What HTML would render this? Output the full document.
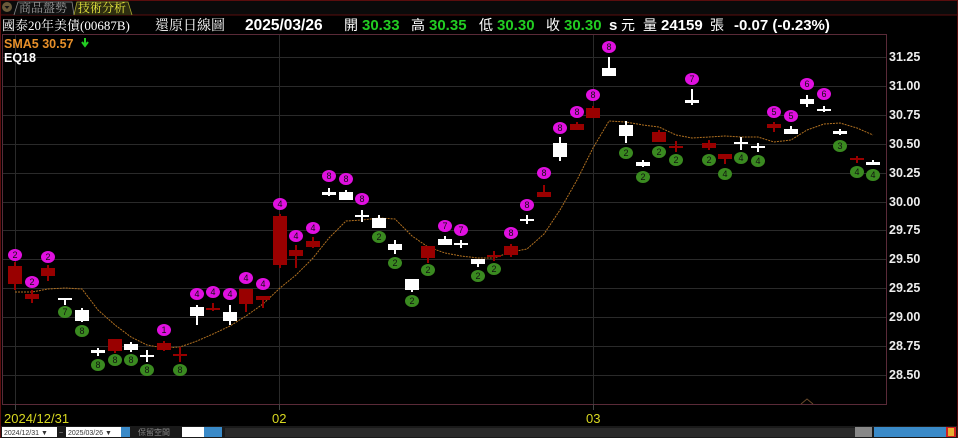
<!DOCTYPE html>
<html><head><meta charset="utf-8"><style>
html,body{margin:0;padding:0;background:#000;width:958px;height:438px;overflow:hidden}
svg{display:block}
</style></head><body>
<svg width="958" height="438" viewBox="0 0 958 438" xmlns="http://www.w3.org/2000/svg" font-family="Liberation Sans, DejaVu Sans, sans-serif">
<rect width="958" height="438" fill="#000"/>
<rect x="0.5" y="0.5" width="957" height="437" fill="none" stroke="#5a0e0e"/>
<rect x="1" y="1" width="956" height="14" fill="#0a0a0a"/>
<line x1="0" y1="15" x2="958" y2="15" stroke="#5a0e0e"/>
<circle cx="7" cy="7" r="5" fill="#6a5a3a"/><path d="M4.5 6 L9.5 6 L7 9 Z" fill="#111"/>
<path d="M14 15 L18 2 L72 2 L74 15" fill="#111" stroke="#888" stroke-width="0.8"/>
<text x="19" y="12" font-size="12" fill="#999" font-family="Liberation Serif, Noto Serif CJK SC, serif">商品盤勢</text>
<path d="M74 15 L77 2 L128 2 L132 15" fill="#2e2e10" stroke="#a8a830" stroke-width="0.8"/>
<text x="78" y="12" font-size="12" fill="#e8e840" font-family="Liberation Serif, Noto Serif CJK SC, serif">技術分析</text>
<g font-size="14" fill="#fff">
<text x="2" y="30" font-size="13" font-family="Liberation Serif, Noto Serif CJK TC, serif">國泰20年美債(00687B)</text>
<text x="155" y="30" font-family="Liberation Serif, Noto Serif CJK TC, serif">還原日線圖</text>
<text x="245" y="30" font-size="15.5" font-weight="bold">2025/03/26</text>
<text x="344" y="30" font-family="Liberation Sans, Noto Sans CJK TC, sans-serif">開</text>
<text x="362" y="30" font-size="15" font-weight="bold" fill="#22cc22">30.33</text>
<text x="411" y="30" font-family="Liberation Sans, Noto Sans CJK TC, sans-serif">高</text>
<text x="429" y="30" font-size="15" font-weight="bold" fill="#22cc22">30.35</text>
<text x="479" y="30" font-family="Liberation Sans, Noto Sans CJK TC, sans-serif">低</text>
<text x="497" y="30" font-size="15" font-weight="bold" fill="#22cc22">30.30</text>
<text x="546" y="30" font-family="Liberation Sans, Noto Sans CJK TC, sans-serif">收</text>
<text x="564" y="30" font-size="15" font-weight="bold" fill="#22cc22">30.30</text>
<text x="609" y="30" font-size="15" font-weight="bold">s</text>
<text x="621" y="30" font-family="Liberation Sans, Noto Sans CJK TC, sans-serif">元</text>
<text x="643" y="30" font-family="Liberation Sans, Noto Sans CJK TC, sans-serif">量</text>
<text x="661" y="30" font-size="15" font-weight="bold">24159</text>
<text x="710" y="30" font-family="Liberation Sans, Noto Sans CJK TC, sans-serif">張</text>
<text x="734" y="30" font-size="15" font-weight="bold">-0.07 (-0.23%)</text>
</g>
<g stroke="#2a2a2a" stroke-width="1">
<line x1="3" y1="57.5" x2="886" y2="57.5"/><line x1="3" y1="86.5" x2="886" y2="86.5"/><line x1="3" y1="115.5" x2="886" y2="115.5"/><line x1="3" y1="144.5" x2="886" y2="144.5"/><line x1="3" y1="173.5" x2="886" y2="173.5"/><line x1="3" y1="202.5" x2="886" y2="202.5"/><line x1="3" y1="230.5" x2="886" y2="230.5"/><line x1="3" y1="259.5" x2="886" y2="259.5"/><line x1="3" y1="288.5" x2="886" y2="288.5"/><line x1="3" y1="317.5" x2="886" y2="317.5"/><line x1="3" y1="346.5" x2="886" y2="346.5"/><line x1="3" y1="375.5" x2="886" y2="375.5"/>
<line x1="15.5" y1="35" x2="15.5" y2="404"/><line x1="279.5" y1="35" x2="279.5" y2="404"/><line x1="593.5" y1="35" x2="593.5" y2="404"/>
</g>
<rect x="2.5" y="34.5" width="884" height="370" fill="none" stroke="#5a2a38"/>
<path d="M801 404 L807 399 L813 404" fill="none" stroke="#6a4a2a"/>
<g stroke="#444"><line x1="15.5" y1="404" x2="15.5" y2="410"/><line x1="279.5" y1="404" x2="279.5" y2="410"/><line x1="593.5" y1="404" x2="593.5" y2="410"/></g>
<text x="4" y="48" font-size="12.5" font-weight="bold" fill="#e8902a">SMA5 30.57</text>
<path d="M85 38 v7 M82 42 l3 4 l3 -4" stroke="#22cc22" stroke-width="2" fill="none"/>
<text x="4" y="62" font-size="12.5" font-weight="bold" fill="#fff">EQ18</text>
<g font-size="12.5" font-weight="bold" fill="#eee">
<text x="889" y="61">31.25</text><text x="889" y="90">31.00</text><text x="889" y="119">30.75</text><text x="889" y="148">30.50</text><text x="889" y="177">30.25</text><text x="889" y="206">30.00</text><text x="889" y="234">29.75</text><text x="889" y="263">29.50</text><text x="889" y="292">29.25</text><text x="889" y="321">29.00</text><text x="889" y="350">28.75</text><text x="889" y="379">28.50</text>
</g>
<g font-size="13" fill="#d8d820"><text x="4" y="423">2024/12/31</text><text x="272" y="423">02</text><text x="586" y="423">03</text></g>
<polyline fill="none" stroke="#b07020" stroke-width="1" stroke-dasharray="2,1" points="15,292 32,292 48,289 65,288 82,289 98,310 115,325 131,337 147,345 164,348 180,347 197,341 213,334 230,326 246,316 263,304 280,288 296,275 313,258 329,238 346,221 362,220 379,218 395,219 412,236 428,247 445,253 461,256 478,258 494,258 511,252 527,249 544,234 560,210 577,180 593,148 609,121 626,122 643,125 659,127 676,135 692,138 709,137 725,136 741,137 758,137 774,142 791,140 807,130 824,124 840,123 857,128 873,135"/>
<g fill="#990000" stroke="#990000" stroke-width="2">
<line x1="15" y1="262" x2="15" y2="290"/><rect x="8" y="266" width="14" height="18" stroke="none"/>
<line x1="32" y1="290" x2="32" y2="303"/><rect x="25" y="294" width="14" height="5" stroke="none"/>
<line x1="48" y1="265" x2="48" y2="281"/><rect x="41" y="268" width="14" height="8" stroke="none"/>
<line x1="115" y1="339" x2="115" y2="353"/><rect x="108" y="339" width="14" height="12" stroke="none"/>
<line x1="164" y1="341" x2="164" y2="351"/><rect x="157" y="343" width="14" height="7" stroke="none"/>
<line x1="180" y1="347" x2="180" y2="362"/><rect x="173" y="354" width="14" height="2" stroke="none"/>
<line x1="213" y1="303" x2="213" y2="311"/><rect x="206" y="308" width="14" height="2" stroke="none"/>
<line x1="246" y1="289" x2="246" y2="312"/><rect x="239" y="289" width="14" height="15" stroke="none"/>
<line x1="263" y1="296" x2="263" y2="308"/><rect x="256" y="296" width="14" height="4" stroke="none"/>
<line x1="280" y1="214" x2="280" y2="268"/><rect x="273" y="216" width="14" height="49" stroke="none"/>
<line x1="296" y1="245" x2="296" y2="268"/><rect x="289" y="250" width="14" height="6" stroke="none"/>
<line x1="313" y1="237" x2="313" y2="248"/><rect x="306" y="241" width="14" height="6" stroke="none"/>
<line x1="428" y1="246" x2="428" y2="263"/><rect x="421" y="246" width="14" height="12" stroke="none"/>
<line x1="494" y1="251" x2="494" y2="261"/><rect x="487" y="255" width="14" height="2" stroke="none"/>
<line x1="511" y1="244" x2="511" y2="257"/><rect x="504" y="246" width="14" height="9" stroke="none"/>
<line x1="544" y1="185" x2="544" y2="197"/><rect x="537" y="192" width="14" height="5" stroke="none"/>
<line x1="577" y1="122" x2="577" y2="130"/><rect x="570" y="124" width="14" height="6" stroke="none"/>
<line x1="593" y1="106" x2="593" y2="118"/><rect x="586" y="108" width="14" height="10" stroke="none"/>
<line x1="659" y1="130" x2="659" y2="142"/><rect x="652" y="132" width="14" height="10" stroke="none"/>
<line x1="676" y1="141" x2="676" y2="152"/><rect x="669" y="146" width="14" height="2" stroke="none"/>
<line x1="709" y1="140" x2="709" y2="150"/><rect x="702" y="143" width="14" height="5" stroke="none"/>
<line x1="725" y1="154" x2="725" y2="164"/><rect x="718" y="154" width="14" height="5" stroke="none"/>
<line x1="774" y1="122" x2="774" y2="132"/><rect x="767" y="124" width="14" height="4" stroke="none"/>
<line x1="857" y1="156" x2="857" y2="163"/><rect x="850" y="158" width="14" height="2" stroke="none"/>
</g>
<g fill="#fff" stroke="#fff" stroke-width="2">
<line x1="65" y1="298" x2="65" y2="305"/><rect x="58" y="298" width="14" height="2" stroke="none"/>
<line x1="82" y1="308" x2="82" y2="322"/><rect x="75" y="310" width="14" height="11" stroke="none"/>
<line x1="98" y1="348" x2="98" y2="356"/><rect x="91" y="350" width="14" height="3" stroke="none"/>
<line x1="131" y1="342" x2="131" y2="352"/><rect x="124" y="344" width="14" height="6" stroke="none"/>
<line x1="147" y1="350" x2="147" y2="362"/><rect x="140" y="355" width="14" height="2" stroke="none"/>
<line x1="197" y1="305" x2="197" y2="325"/><rect x="190" y="307" width="14" height="9" stroke="none"/>
<line x1="230" y1="305" x2="230" y2="325"/><rect x="223" y="312" width="14" height="9" stroke="none"/>
<line x1="329" y1="188" x2="329" y2="196"/><rect x="322" y="192" width="14" height="3" stroke="none"/>
<line x1="346" y1="190" x2="346" y2="200"/><rect x="339" y="192" width="14" height="8" stroke="none"/>
<line x1="362" y1="210" x2="362" y2="222"/><rect x="355" y="215" width="14" height="2" stroke="none"/>
<line x1="379" y1="215" x2="379" y2="228"/><rect x="372" y="218" width="14" height="10" stroke="none"/>
<line x1="395" y1="240" x2="395" y2="254"/><rect x="388" y="244" width="14" height="6" stroke="none"/>
<line x1="412" y1="279" x2="412" y2="292"/><rect x="405" y="279" width="14" height="11" stroke="none"/>
<line x1="445" y1="236" x2="445" y2="245"/><rect x="438" y="239" width="14" height="6" stroke="none"/>
<line x1="461" y1="240" x2="461" y2="248"/><rect x="454" y="243" width="14" height="2" stroke="none"/>
<line x1="478" y1="259" x2="478" y2="267"/><rect x="471" y="259" width="14" height="5" stroke="none"/>
<line x1="527" y1="215" x2="527" y2="224"/><rect x="520" y="219" width="14" height="2" stroke="none"/>
<line x1="560" y1="137" x2="560" y2="161"/><rect x="553" y="143" width="14" height="14" stroke="none"/>
<line x1="609" y1="57" x2="609" y2="76"/><rect x="602" y="68" width="14" height="8" stroke="none"/>
<line x1="626" y1="121" x2="626" y2="143"/><rect x="619" y="125" width="14" height="11" stroke="none"/>
<line x1="643" y1="160" x2="643" y2="167"/><rect x="636" y="162" width="14" height="4" stroke="none"/>
<line x1="692" y1="89" x2="692" y2="105"/><rect x="685" y="100" width="14" height="3" stroke="none"/>
<line x1="741" y1="137" x2="741" y2="150"/><rect x="734" y="142" width="14" height="2" stroke="none"/>
<line x1="758" y1="143" x2="758" y2="152"/><rect x="751" y="146" width="14" height="2" stroke="none"/>
<line x1="791" y1="126" x2="791" y2="134"/><rect x="784" y="129" width="14" height="5" stroke="none"/>
<line x1="807" y1="95" x2="807" y2="107"/><rect x="800" y="99" width="14" height="5" stroke="none"/>
<line x1="824" y1="106" x2="824" y2="112"/><rect x="817" y="109" width="14" height="2" stroke="none"/>
<line x1="840" y1="129" x2="840" y2="135"/><rect x="833" y="131" width="14" height="3" stroke="none"/>
<line x1="873" y1="160" x2="873" y2="165"/><rect x="866" y="162" width="14" height="3" stroke="none"/>
</g>
<g fill="#e010e0">
<ellipse cx="15" cy="255" rx="7" ry="6"/><ellipse cx="32" cy="282" rx="7" ry="6"/><ellipse cx="48" cy="257" rx="7" ry="6"/><ellipse cx="164" cy="330" rx="7" ry="6"/><ellipse cx="197" cy="294" rx="7" ry="6"/><ellipse cx="213" cy="292" rx="7" ry="6"/><ellipse cx="230" cy="294" rx="7" ry="6"/><ellipse cx="246" cy="278" rx="7" ry="6"/><ellipse cx="263" cy="284" rx="7" ry="6"/><ellipse cx="280" cy="204" rx="7" ry="6"/><ellipse cx="296" cy="236" rx="7" ry="6"/><ellipse cx="313" cy="228" rx="7" ry="6"/><ellipse cx="329" cy="176" rx="7" ry="6"/><ellipse cx="346" cy="179" rx="7" ry="6"/><ellipse cx="362" cy="199" rx="7" ry="6"/><ellipse cx="445" cy="226" rx="7" ry="6"/><ellipse cx="461" cy="230" rx="7" ry="6"/><ellipse cx="511" cy="233" rx="7" ry="6"/><ellipse cx="527" cy="205" rx="7" ry="6"/><ellipse cx="544" cy="173" rx="7" ry="6"/><ellipse cx="560" cy="128" rx="7" ry="6"/><ellipse cx="577" cy="112" rx="7" ry="6"/><ellipse cx="593" cy="95" rx="7" ry="6"/><ellipse cx="609" cy="47" rx="7" ry="6"/><ellipse cx="692" cy="79" rx="7" ry="6"/><ellipse cx="774" cy="112" rx="7" ry="6"/><ellipse cx="791" cy="116" rx="7" ry="6"/><ellipse cx="807" cy="84" rx="7" ry="6"/><ellipse cx="824" cy="94" rx="7" ry="6"/>
</g>
<g fill="#3a8a20">
<ellipse cx="65" cy="312" rx="7" ry="6"/><ellipse cx="82" cy="331" rx="7" ry="6"/><ellipse cx="98" cy="365" rx="7" ry="6"/><ellipse cx="115" cy="360" rx="7" ry="6"/><ellipse cx="131" cy="360" rx="7" ry="6"/><ellipse cx="147" cy="370" rx="7" ry="6"/><ellipse cx="180" cy="370" rx="7" ry="6"/><ellipse cx="379" cy="237" rx="7" ry="6"/><ellipse cx="395" cy="263" rx="7" ry="6"/><ellipse cx="412" cy="301" rx="7" ry="6"/><ellipse cx="428" cy="270" rx="7" ry="6"/><ellipse cx="478" cy="276" rx="7" ry="6"/><ellipse cx="494" cy="269" rx="7" ry="6"/><ellipse cx="626" cy="153" rx="7" ry="6"/><ellipse cx="643" cy="177" rx="7" ry="6"/><ellipse cx="659" cy="152" rx="7" ry="6"/><ellipse cx="676" cy="160" rx="7" ry="6"/><ellipse cx="709" cy="160" rx="7" ry="6"/><ellipse cx="725" cy="174" rx="7" ry="6"/><ellipse cx="741" cy="158" rx="7" ry="6"/><ellipse cx="758" cy="161" rx="7" ry="6"/><ellipse cx="840" cy="146" rx="7" ry="6"/><ellipse cx="857" cy="172" rx="7" ry="6"/><ellipse cx="873" cy="175" rx="7" ry="6"/>
</g>
<g font-size="9" fill="#111" text-anchor="middle">
<text x="15" y="258">2</text><text x="32" y="285">2</text><text x="48" y="260">2</text><text x="164" y="333">1</text><text x="197" y="297">4</text><text x="213" y="295">4</text><text x="230" y="297">4</text><text x="246" y="281">4</text><text x="263" y="287">4</text><text x="280" y="207">4</text><text x="296" y="239">4</text><text x="313" y="231">4</text><text x="329" y="179">8</text><text x="346" y="182">8</text><text x="362" y="202">8</text><text x="445" y="229">7</text><text x="461" y="233">7</text><text x="511" y="236">8</text><text x="527" y="208">8</text><text x="544" y="176">8</text><text x="560" y="131">8</text><text x="577" y="115">8</text><text x="593" y="98">8</text><text x="609" y="50">8</text><text x="692" y="82">7</text><text x="774" y="115">5</text><text x="791" y="119">5</text><text x="807" y="87">6</text><text x="824" y="97">6</text>
<text x="65" y="315">7</text><text x="82" y="334">8</text><text x="98" y="368">8</text><text x="115" y="363">8</text><text x="131" y="363">8</text><text x="147" y="373">8</text><text x="180" y="373">8</text><text x="379" y="240">2</text><text x="395" y="266">2</text><text x="412" y="304">2</text><text x="428" y="273">2</text><text x="478" y="279">2</text><text x="494" y="272">2</text><text x="626" y="156">2</text><text x="643" y="180">2</text><text x="659" y="155">2</text><text x="676" y="163">2</text><text x="709" y="163">2</text><text x="725" y="177">4</text><text x="741" y="161">4</text><text x="758" y="164">4</text><text x="840" y="149">3</text><text x="857" y="175">4</text><text x="873" y="178">4</text>
</g>
<rect x="1" y="426" width="956" height="12" fill="#1a1a1a"/>
<rect x="2" y="427" width="55" height="10" fill="#fff"/><text x="4" y="435" font-size="7" fill="#333">2024/12/31 ▼</text>
<text x="59" y="435" font-size="7" fill="#aaa">~</text>
<rect x="66" y="427" width="55" height="10" fill="#fff"/><text x="68" y="435" font-size="7" fill="#333">2025/03/26 ▼</text>
<rect x="121" y="427" width="9" height="10" fill="#3a8ac8"/>
<text x="138" y="435" font-size="8" fill="#888" font-family="Liberation Sans, Noto Sans CJK TC, sans-serif">保留空間</text>
<rect x="182" y="427" width="22" height="10" fill="#fff"/><rect x="204" y="427" width="18" height="10" fill="#3a8ac8"/>
<rect x="225" y="428" width="630" height="9" fill="#2a2a2a"/>
<rect x="855" y="427" width="17" height="10" fill="#888"/>
<rect x="874" y="427" width="72" height="10" fill="#3a8ac8"/>
<rect x="946" y="427" width="10" height="10" fill="#d02020"/><rect x="948" y="428" width="6" height="8" fill="#e8b030"/>
</svg>
</body></html>
